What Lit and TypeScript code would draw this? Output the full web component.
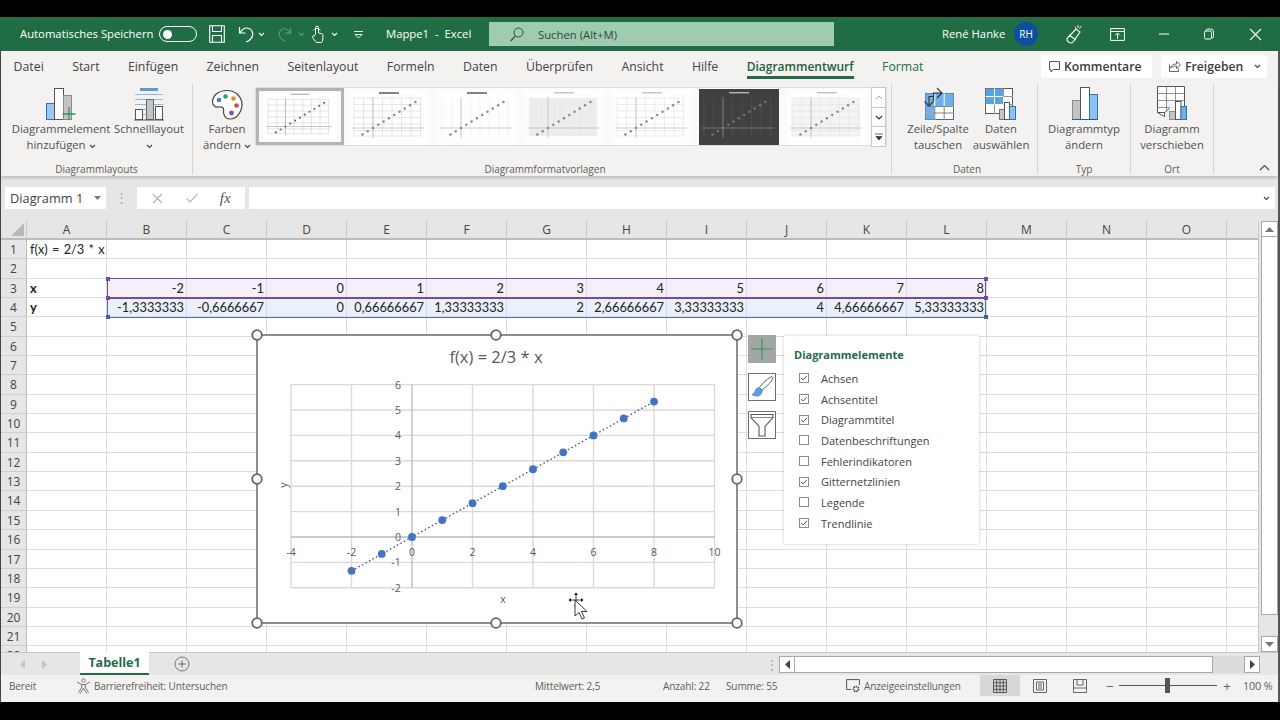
import { LitElement, html, css, svg } from 'lit';
import { customElement } from 'lit/decorators.js';

const COLS = ['A', 'B', 'C', 'D', 'E', 'F', 'G', 'H', 'I', 'J', 'K', 'L', 'M', 'N', 'O', ''];
const XS = ['-2', '-1', '0', '1', '2', '3', '4', '5', '6', '7', '8'];
const YS = [
  '-1,3333333',
  '-0,6666667',
  '0',
  '0,66666667',
  '1,33333333',
  '2',
  '2,66666667',
  '3,33333333',
  '4',
  '4,66666667',
  '5,33333333',
];
const TABS = [
  'Datei',
  'Start',
  'Einfügen',
  'Zeichnen',
  'Seitenlayout',
  'Formeln',
  'Daten',
  'Überprüfen',
  'Ansicht',
  'Hilfe',
  'Diagrammentwurf',
  'Format',
];
const PANEL_ITEMS: [string, boolean][] = [
  ['Achsen', true],
  ['Achsentitel', true],
  ['Diagrammtitel', true],
  ['Datenbeschriftungen', false],
  ['Fehlerindikatoren', false],
  ['Gitternetzlinien', true],
  ['Legende', false],
  ['Trendlinie', true],
];

const caret = (color = '#444') => html`<svg class="caret" width="7" height="5" viewBox="0 0 7 5">
  <path d="M1 1l2.500 2.500L6 1" fill="none" stroke=${color} stroke-width="1.100" />
</svg>`;

// small preview of the chart, one per gallery entry
const thumb = (
  opts: { bg?: string; plot?: string; line?: string; dot?: string; hgrid?: boolean; bold?: boolean } = {}
) => {
  const line = opts.line ?? '#cfcfcf';
  const dot = opts.dot ?? '#5f6a88';
  const vx = [5, 14.500, 24, 33.500, 43, 52.500, 62, 71.500];
  const hy = [9, 15.500, 22, 28.500, 35, 41.500, 47];
  const pts = [-2, -1, 0, 1, 2, 3, 4, 5, 6, 7, 8];
  return html`<svg width="80" height="56" viewBox="0 0 80 56" class="thumb-svg">
    <rect width="80" height="56" fill=${opts.bg ?? '#fff'} />
    ${opts.plot ? svg`<rect x="5" y="9" width="68" height="38" fill=${opts.plot} />` : ''}
    ${vx.map((x) => svg`<line x1=${x} x2=${x} y1="9" y2="47" stroke=${line} stroke-width="0.600" />`)}
    ${opts.hgrid === false
      ? ''
      : hy.map((y) => svg`<line x1="5" x2="72" y1=${y} y2=${y} stroke=${line} stroke-width="0.600" />`)}
    <line x1="3" x2="75" y1="39" y2="39" stroke="#9a9a9a" stroke-width="0.600" />
    <line x1="24" x2="24" y1="8" y2="49" stroke="#9a9a9a" stroke-width="0.600" />
    <rect
      x="30"
      y="3"
      width="20"
      height=${opts.bold ? 2 : 1.400}
      fill=${opts.bold ? '#666' : '#b5b5b5'}
    />
    ${pts.map((p) => svg`<circle cx=${24 + p * 5.300} cy=${39 - p * 3.250} r="1.200" fill=${dot} />`)}
  </svg>`;
};

const bars = html`<svg width="32" height="34" viewBox="0 0 32 34">
  <rect x="1.500" y="16.500" width="8" height="16" fill="#9cc8f2" stroke="#2e75b6" />
  <rect x="9.500" y="1.500" width="9" height="31" fill="#fff" stroke="#555" />
  <rect x="18.500" y="8.500" width="8" height="24" fill="#c4c4c4" stroke="#8a8a8a" />
  <path d="M24 20v13M17.500 27h13" stroke="#2c9158" stroke-width="1.300" fill="none" />
</svg>`;

const quickLayout = html`<svg width="30" height="34" viewBox="0 0 30 34">
  <rect x="6" y="1" width="18" height="3" fill="#5a9bd8" />
  <path d="M1 7.500h28M1 12.500h28M1 17.500h28M1 22.500h28M1 27.500h28" stroke="#8fb9e0" stroke-width="1" />
  <rect x="1.500" y="22.500" width="7" height="10" fill="#fff" stroke="#555" />
  <rect x="12.500" y="12.500" width="7" height="20" fill="#c4c4c4" stroke="#6b6b6b" />
  <rect x="21.500" y="19.500" width="7" height="13" fill="#fff" stroke="#555" />
  <path d="M0 33h30" stroke="#555" />
</svg>`;

const palette = html`<svg width="32" height="32" viewBox="0 0 32 32">
  <path
    d="M16 1.500C7 1.500 1.500 7 1.500 13c0 4 3 5.500 6.500 5 3-.4 5 .5 4.600 3.200-.5 3.300 .6 8.800 6.400 8.800 7 0 12-7.500 12-15C30.500 7 24 1.500 16 1.500z"
    fill="#fff"
    stroke="#444"
    stroke-width="1.200"
  />
  <circle cx="8" cy="11" r="2.300" fill="#3f7fc4" />
  <circle cx="14.500" cy="7.500" r="2.300" fill="#3aa35b" />
  <circle cx="22.500" cy="9.500" r="2.300" fill="#e08a2c" />
  <circle cx="25.500" cy="16.500" r="2.300" fill="#c94f3f" />
  <circle cx="20.500" cy="24" r="2.400" fill="#8b4fa8" />
</svg>`;

const swapTable = html`<svg width="32" height="34" viewBox="0 0 32 34">
  <rect x="3.500" y="6.500" width="28" height="26" fill="#fff" stroke="#4a6c8c" />
  <path d="M3.500 19.500h28v-13h-28z" fill="#6fb0ea" />
  <rect x="3.500" y="19.500" width="9.300" height="13" fill="#6fb0ea" />
  <path d="M3.500 19.500h28M3.500 26h28M12.800 6.500v26M22.200 6.500v26" stroke="#fff" stroke-width="1" />
  <path d="M3.500 19.500h28M3.500 26h28M12.800 19.500v13M22.200 19.500v13" stroke="#555" stroke-width="0.700" />
  <path d="M15 1l5 5-5 5M20 6h-8.500v8" fill="none" stroke="#333" stroke-width="1.100" />
  <path d="M11.500 14.500l-4.500 4.500-4.500-4.500" fill="none" stroke="#333" stroke-width="1.100" />
  <path d="M7 19V9.500h4" fill="none" stroke="#333" stroke-width="1.100" />
</svg>`;

const selectData = html`<svg width="32" height="34" viewBox="0 0 32 34">
  <rect x="0.500" y="1.500" width="27" height="25" fill="#fff" stroke="#555" />
  <rect x="0.500" y="1.500" width="18" height="8" fill="#5aa2e6" />
  <rect x="0.500" y="9.500" width="18" height="8" fill="#5aa2e6" />
  <path d="M0.500 9.500h27M0.500 17.500h27M9.500 1.500v25M18.500 1.500v25" stroke="#fff" />
  <path d="M18.500 9.500h9M18.500 17.500h9M18.500 1.500v8M0.500 17.500v9M9.500 17.500v9" stroke="#666" stroke-width="0.700" />
  <rect x="14.500" y="22.500" width="5" height="10" fill="#c4c4c4" stroke="#777" />
  <rect x="19.500" y="15.500" width="5" height="17" fill="#fff" stroke="#555" />
  <rect x="24.500" y="19.500" width="6" height="13" fill="#8fc0ef" stroke="#2e75b6" />
</svg>`;

const chartType = html`<svg width="30" height="35" viewBox="0 0 30 35">
  <rect x="3.500" y="14.500" width="8" height="19" fill="#c4c4c4" stroke="#8a8a8a" />
  <rect x="11.500" y="1.500" width="9" height="32" fill="#fff" stroke="#555" />
  <rect x="20.500" y="8.500" width="8" height="25" fill="#8fc0ef" stroke="#2e75b6" />
  <path d="M3 33.500h26" stroke="#1f5f99" />
</svg>`;

const moveChart = html`<svg width="32" height="36" viewBox="0 0 32 36">
  <path d="M1.500 1.500h27v21h-9M1.500 1.500v26h7l5-4" fill="#fff" stroke="#555" />
  <path
    d="M1.500 8.500h27M1.500 15.500h27M1.500 22.500h12M10.500 1.500v24M19.500 1.500v21"
    fill="none"
    stroke="#777"
    stroke-width="0.800"
  />
  <path d="M1.500 27.500l7 0 0 4z" fill="#fff" stroke="#555" />
  <rect x="13.500" y="26.500" width="6" height="8" fill="#c4c4c4" stroke="#8a8a8a" />
  <rect x="19.500" y="16.500" width="5.500" height="18" fill="#fff" stroke="#555" />
  <rect x="25" y="21.500" width="5.500" height="13" fill="#6fb0ea" stroke="#2e75b6" />
</svg>`;

const points = [-2, -1, 0, 1, 2, 3, 4, 5, 6, 7, 8];
const X = (v: number) => 162 + 30.250 * v;
const Y = (v: number) => 209 - 25.400 * v;

const chart = html`<svg class="chart-svg" width="500" height="304" viewBox="0 0 500 304">
  <rect x="7" y="7" width="480" height="288" fill="#fff" stroke="#7b7b7b" stroke-width="1.700" />
  <text x="246" y="35" class="c-title" text-anchor="middle">f(x) = 2/3 * x</text>
  ${[-4, -2, 2, 4, 6, 8, 10].map(
    (v) => svg`<line x1=${X(v)} x2=${X(v)} y1=${Y(6)} y2=${Y(-2)} stroke="#d9d9d9" stroke-width="1.400" />`
  )}
  ${[-2, -1, 1, 2, 3, 4, 5, 6].map(
    (v) => svg`<line x1=${X(-4)} x2=${X(10)} y1=${Y(v)} y2=${Y(v)} stroke="#d9d9d9" stroke-width="1.400" />`
  )}
  <line x1=${X(0)} x2=${X(0)} y1=${Y(6)} y2=${Y(-2)} stroke="#b8b8b8" stroke-width="1.300" />
  <line x1=${X(-4)} x2=${X(10)} y1=${Y(0)} y2=${Y(0)} stroke="#b8b8b8" stroke-width="1.300" />
  ${[6, 5, 4, 3, 2, 1, 0, -1, -2].map(
    (v) => svg`<text x=${v < 0 ? 146 : 148} y=${Y(v) + 4} class="c-tick" text-anchor="middle">${v}</text>`
  )}
  ${[-4, -2, 0, 2, 4, 6, 8, 10].map(
    (v) => svg`<text x=${X(v)} y="228" class="c-tick" text-anchor="middle">${v}</text>`
  )}
  <text x="253" y="275" class="c-tick" text-anchor="middle">x</text>
  <text class="c-tick" text-anchor="middle" transform="translate(37 157) rotate(-90)">y</text>
  <line
    x1=${X(-2)}
    y1=${Y(-4 / 3)}
    x2=${X(8)}
    y2=${Y(16 / 3)}
    stroke="#44587c"
    stroke-width="1.400"
    stroke-dasharray="1.500 2.500"
  />
  ${points.map((p) => svg`<circle cx=${X(p)} cy=${Y((p * 2) / 3)} r="3.900" fill="#4472c4" />`)}
  ${[
    [7, 7],
    [246, 7],
    [487, 7],
    [7, 151],
    [487, 151],
    [7, 295],
    [246, 295],
    [487, 295],
  ].map(
    ([cx, cy]) =>
      svg`<circle cx=${cx} cy=${cy} r="4.800" fill="#fff" stroke="#666" stroke-width="1.800" />`
  )}
  <g transform="translate(326 272)" fill="#111">
    <path d="M0-7.500l-2 2.500h4zM0 7.500l-2-2.500h4zM-7.500 0l2.500-2v4zM7.500 0l-2.500-2v4z" />
    <path d="M0-5v10M-5 0h10" stroke="#111" stroke-width="0.800" />
  </g>
  <path d="M325 272v16l4-3.500 3 6.500 2.500-1-3-6.500h5.500z" fill="#fff" stroke="#222" stroke-width="0.900" />
</svg>`;

@customElement('app-root')
class AppRoot extends LitElement {
  static styles = css`
    :host {
      display: block;
      width: 1280px;
      height: 720px;
      background: #000;
      overflow: hidden;
      font-family: 'Open Sans', 'Noto Sans', sans-serif;
      color: #444;
    }
    .window {
      margin-top: 17px;
      height: 685px;
      display: flex;
      flex-direction: column;
      background: #f3f2f1;
      border-left: 1px solid #444;
      border-right: 2px solid #555;
      box-sizing: border-box;
    }

    /* title bar */
    .titlebar {
      flex: 0 0 34px;
      margin-left: -1px;
      margin-right: -2px;
      background: #1f6c45;
      color: #fff;
      font-size: 11.300px;
      display: grid;
      grid-template-columns: 139px 50px 29px 20px 20px 20px 13px 20px 23px 32px 103px 453px 72px 51px 45px 48px 45px 46px 31px;
      padding-left: 20px;
      align-items: center;
      white-space: nowrap;
    }
    .titlebar svg {
      display: block;
    }
    .tt {
      margin-top: -2px;
    }
    .toggle {
      width: 36px;
      height: 14px;
      border: 1.200px solid #fff;
      border-radius: 9px;
      position: relative;
    }
    .toggle::before {
      content: '';
      position: absolute;
      left: 3px;
      top: 2.500px;
      width: 9px;
      height: 9px;
      border-radius: 50%;
      background: #fff;
    }
    .search {
      width: 345px;
      height: 24px;
      background: #9fcbb1;
      color: #2c4a3a;
      display: flex;
      align-items: center;
      gap: 14px;
      padding-left: 21px;
      box-sizing: border-box;
    }
    .avatar {
      width: 24px;
      height: 24px;
      border-radius: 50%;
      background: #0d4f9e;
      font-size: 10px;
      display: flex;
      align-items: center;
      justify-content: center;
    }

    /* ribbon tabs */
    .tabs {
      flex: 0 0 31px;
      display: flex;
      align-items: flex-start;
      gap: 28.400px;
      padding-left: 12.600px;
      font-size: 12.300px;
      color: #444;
      white-space: nowrap;
    }
    .tab {
      height: 31px;
      line-height: 31px;
      box-sizing: border-box;
    }
    .tab.active {
      color: #1d5f41;
      font-weight: 600;
      font-size: 12px;
      border-bottom: 3px solid #1f6c45;
      height: 28px;
    }
    .tab.format {
      color: #1d6f4a;
    }
    .share {
      margin-left: auto;
      margin-top: 4px;
      display: flex;
      gap: 9px;
      margin-right: 11px;
    }
    .share-btn {
      height: 23px;
      background: #fff;
      display: flex;
      align-items: center;
      gap: 3px;
      font-weight: 600;
      font-size: 12.200px;
      color: #3b3b3b;
      box-sizing: border-box;
      padding-left: 7px;
      border-radius: 2px;
    }
    .share-btn.comment {
      width: 111px;
    }
    .share-btn.free {
      width: 106px;
    }
    .share-btn .caret {
      margin-left: 8px;
    }

    /* ribbon body */
    .ribbon {
      flex: 0 0 94px;
      display: flex;
      font-size: 11.300px;
      color: #505050;
      box-shadow: 0 2px 3px rgba(0, 0, 0, 0.18);
      position: relative;
      z-index: 1;
    }
    .group {
      height: 90px;
      margin-top: 2px;
      box-sizing: border-box;
      border-right: 1px solid #d4d4d4;
      display: flex;
      flex-direction: column;
    }
    .group-main {
      flex: 1;
      display: flex;
      align-items: flex-start;
    }
    .group-label {
      flex: 0 0 16px;
      text-align: center;
      font-size: 10px;
      line-height: 16px;
      color: #5c5c5c;
      margin-bottom: -3px;
    }
    .g1 {
      width: 192px;
      padding-left: 5px;
    }
    .g1 .group-label {
      margin-left: -5px;
    }
    .g2 {
      width: 699px;
      padding-left: 12px;
    }
    .g2 .group-label {
      margin-left: -6px;
    }
    .g3 {
      width: 146px;
      padding-left: 11px;
    }
    .g3 .group-label {
      margin-left: -6px;
    }
    .g4 {
      width: 93px;
    }
    .g5 {
      width: 83px;
    }
    .rest {
      flex: 1;
      display: flex;
      justify-content: flex-end;
      align-items: flex-end;
      padding: 0 8px 5px 0;
    }
    .rb {
      display: flex;
      flex-direction: column;
      align-items: center;
      text-align: center;
      white-space: nowrap;
    }
    .rb .ico {
      height: 34px;
      display: flex;
      align-items: flex-end;
      margin-top: 3px;
    }
    .rb .lbl {
      line-height: 16px;
    }
    .w110 {
      width: 110px;
    }
    .w66 {
      width: 66px;
    }
    .w44 {
      width: 44px;
    }
    .w70 {
      width: 70px;
    }
    .w56 {
      width: 56px;
    }
    .wfull {
      width: 100%;
    }
    .gallery {
      margin: 3px 0 0 6px;
      width: 632px;
      height: 59px;
      border: 1px solid #dedede;
      background: #fbfbfa;
      box-sizing: border-box;
      display: flex;
      position: relative;
    }
    .thumb {
      width: 80px;
      height: 56px;
      margin-top: 1px;
      opacity: 0.8;
      flex: none;
    }
    .thumb-svg {
      display: block;
      filter: blur(0.400px);
    }
    .thumb.sel {
      opacity: 1;
      width: 88px;
      height: 57px;
      margin: 0 5px 0 0;
      border: 3px solid #b4b4b4;
      box-sizing: border-box;
    }
    .thumb.sel .thumb-svg {
      width: 82px;
      height: 51px;
    }
    .thumb + .thumb:not(.first) {
      margin-left: 7.500px;
    }
    .spin {
      position: absolute;
      right: 0;
      top: -1px;
      width: 14px;
      height: 59px;
      display: flex;
      flex-direction: column;
      border-left: 1px solid #dedede;
    }
    .spin div {
      flex: 1;
      background: #fff;
      border: 1px solid #c9c9c9;
      margin: 0 0 -1px -1px;
      display: flex;
      align-items: center;
      justify-content: center;
    }

    /* formula bar */
    .formula {
      flex: 0 0 45px;
      background: #e6e6e6;
      display: flex;
      align-items: flex-start;
      padding-top: 11px;
      box-sizing: border-box;
      position: relative;
    }
    .namebox,
    .fx,
    .input {
      height: 22px;
      background: #fff;
      display: flex;
      align-items: center;
      box-sizing: border-box;
    }
    .namebox {
      width: 101px;
      margin-left: 4px;
      padding: 0 5px;
      font-size: 12.800px;
      color: #444;
      justify-content: space-between;
    }
    .vdots {
      width: 31px;
      text-align: center;
      color: #a8a8a8;
      font-size: 13px;
      line-height: 20px;
    }
    .fx {
      width: 108px;
      justify-content: space-around;
      padding: 0 4px;
    }
    .fx i {
      font-family: 'Liberation Serif', serif;
      font-size: 15px;
      color: #555;
    }
    .input {
      margin-left: 4px;
      width: 1026px;
      justify-content: flex-end;
      padding-right: 5px;
    }

    /* sheet */
    .sheet-wrap {
      flex: 0 0 431px;
      display: flex;
      background: #e6e6e6;
    }
    .sheet {
      width: 1258px;
      height: 431px;
      overflow: hidden;
      position: relative;
      background: #fff;
    }
    .grid {
      display: grid;
      grid-template-columns: 26px repeat(15, 80px) 32px;
      grid-template-rows: 19px;
      grid-auto-rows: 19.350px;
      font-family: Lato, 'Open Sans', sans-serif;
      font-size: 12.800px;
      word-spacing: 1px;
      color: #222;
    }
    .grid > div {
      box-sizing: border-box;
      border-right: 1px solid #dcdcdc;
      border-bottom: 1px solid #dcdcdc;
      padding: 0 2px;
      line-height: 19px;
      white-space: nowrap;
      overflow: visible;
    }
    .grid > .ch {
      background: #e6e6e6;
      text-align: center;
      font-family: 'Open Sans', sans-serif;
      font-size: 12px;
      color: #444;
      border-right-color: #c6c6c6;
      border-bottom-color: #bcbcbc;
      border-bottom-width: 2px;
      line-height: 18px;
      padding: 0;
    }
    .grid > .corner {
      position: relative;
    }
    .corner::after {
      content: '';
      position: absolute;
      right: 2px;
      bottom: 2px;
      border-style: solid;
      border-width: 0 0 13px 13px;
      border-color: transparent transparent #b8b8b8 transparent;
    }
    .grid > .rh {
      background: #e6e6e6;
      text-align: center;
      font-family: 'Open Sans', sans-serif;
      font-size: 12px;
      color: #444;
      border-right-color: #bcbcbc;
      border-bottom-color: #cfcfcf;
      padding: 0;
    }
    .grid > .label {
      padding-left: 3px;
    }
    .grid > .num {
      text-align: right;
    }
    .grid > .b {
      font-weight: 700;
    }
    .grid > .r3 {
      background: #f4effa;
    }
    .grid > .r4 {
      background: #eaf1fa;
    }
    .range {
      position: absolute;
      left: 106px;
      width: 879px;
      height: 20px;
      box-sizing: border-box;
      pointer-events: none;
    }
    .range.x {
      top: 57px;
      border: 1.500px solid #6f4ea0;
    }
    .range.y {
      top: 76.500px;
      border: 1.500px solid #4f71b0;
      border-top-color: #6f4ea0;
    }
    .h {
      position: absolute;
      width: 4px;
      height: 4px;
    }
    .h.p {
      background: #6f4ea0;
    }
    .h.u {
      background: #3f5fa8;
    }
    .chart {
      position: absolute;
      left: 249px;
      top: 107px;
    }
    .chart-svg {
      display: block;
      font-family: 'Open Sans', sans-serif;
    }
    .c-title {
      font-size: 16.500px;
      fill: #595959;
    }
    .c-tick {
      font-size: 10.500px;
      fill: #595959;
    }
    .tools {
      position: absolute;
      left: 747px;
      top: 114px;
      display: flex;
      flex-direction: column;
      gap: 10px;
    }
    .tool {
      width: 28px;
      height: 28px;
      box-sizing: border-box;
      border: 1px solid #6e6e6e;
      background: #fff;
      display: flex;
      align-items: center;
      justify-content: center;
    }
    .tool.on {
      background: #a1a8a4;
      border-color: #a1a8a4;
    }
    .panel {
      position: absolute;
      left: 783px;
      top: 115px;
      width: 195px;
      height: 208px;
      background: #fff;
      box-shadow: 0 0 3px rgba(0, 0, 0, 0.22);
      padding: 10px 0 0 10px;
      box-sizing: border-box;
      font-family: 'Open Sans', sans-serif;
    }
    .panel h3 {
      margin: 0 0 4px;
      font-size: 11px;
      line-height: 18px;
      font-weight: 700;
      color: #1e6b49;
    }
    .panel-item {
      height: 20.700px;
      display: flex;
      align-items: center;
      font-size: 11px;
      color: #444;
      white-space: nowrap;
    }
    .check {
      width: 10px;
      height: 10px;
      margin: 0 12px 0 5px;
      border: 1px solid #8a8a8a;
      box-sizing: border-box;
      display: flex;
      background: #fff;
    }

    /* scrollbar */
    .vscroll {
      flex: 1;
      display: flex;
      flex-direction: column;
      padding-left: 2px;
      border-left: 1px solid #c8c8c8;
    }
    .sb-btn {
      width: 17px;
      height: 16px;
      background: #fff;
      border: 1px solid #a8a8a8;
      box-sizing: border-box;
      display: flex;
      align-items: center;
      justify-content: center;
      flex: none;
    }
    .v-thumb {
      width: 17px;
      height: 378px;
      background: #fff;
      border: 1px solid #a8a8a8;
      border-top: 0;
      box-sizing: border-box;
      flex: none;
    }
    .v-space {
      flex: 1;
    }

    /* sheet tabs */
    .sheetbar {
      flex: 0 0 23px;
      background: #e6e6e6;
      border-top: 1px solid #c8c8c8;
      box-sizing: border-box;
      display: grid;
      grid-template-columns: 79px 69px 617px 13px 481px;
      align-items: center;
    }
    .nav {
      display: flex;
      gap: 17px;
      padding-left: 19px;
      color: #b5b5b5;
    }
    .sheet-tab {
      height: 23px;
      margin-top: -1px;
      background: #fff;
      border-bottom: 2px solid #1f6c45;
      box-sizing: border-box;
      text-align: center;
      font-weight: 700;
      font-size: 12.500px;
      line-height: 22px;
      color: #1e6b49;
    }
    .add {
      padding-left: 25px;
    }
    .hdots {
      color: #a8a8a8;
      font-size: 12px;
    }
    .hscroll {
      display: flex;
      height: 17px;
      width: 481px;
    }
    .hscroll .sb-btn {
      width: 16px;
      height: 17px;
    }
    .h-thumb {
      width: 418px;
      background: #fff;
      border: 1px solid #a8a8a8;
      border-left: 0;
      box-sizing: border-box;
    }
    .h-space {
      flex: 1;
      background: #dcdcdc;
    }

    /* status bar */
    .status {
      flex: 1;
      display: grid;
      grid-template-columns: 67px 459px 128px 63px 120px 134px 40px 40px 40px 143px 1fr;
      padding: 0 0 6px 8px;
      align-items: center;
      font-size: 10px;
      letter-spacing: -0.120px;
      color: #5c5c5c;
      white-space: nowrap;
    }
    .status > div {
      display: flex;
      align-items: center;
      gap: 3px;
    }
    .status > .view {
      justify-content: center;
      height: 21px;
    }
    .status > .view.on {
      background: #d8d8d8;
    }
    .status > .zoom {
      padding-left: 6px;
      gap: 6px;
      font-size: 13px;
    }
    .status > .pct {
      font-size: 10.800px;
    }
    .slider {
      width: 98px;
      height: 1.500px;
      background: #555;
      position: relative;
    }
    .slider::after {
      content: '';
      position: absolute;
      left: 46px;
      top: -7px;
      width: 5px;
      height: 15px;
      background: #555;
    }
  `;

  render() {
    const rows = Array.from({ length: 22 }, (_, i) => i + 1);
    return html`
      <div class="window">
        ${this.renderTitlebar()}
        <div class="tabs">
          ${TABS.map(
            (t) =>
              html`<div class="tab ${t === 'Diagrammentwurf' ? 'active' : ''} ${t === 'Format' ? 'format' : ''}">
                ${t}
              </div>`
          )}
          <div class="share">
            <div class="share-btn comment">
              <svg width="13" height="13" viewBox="0 0 13 13">
                <path d="M1.500 1.500h10v8h-6l-2.500 2.500v-2.500h-1.500z" fill="none" stroke="#555" />
              </svg>
              Kommentare
            </div>
            <div class="share-btn free">
              <svg width="14" height="13" viewBox="0 0 14 13">
                <path d="M1.500 4.500v7h9v-3M2.500 8c1-3 3-4 6-4V1.500l4 3.500-4 3.500V6c-2 0-4 .5-6 2z" fill="none" stroke="#666" />
              </svg>
              Freigeben ${caret()}
            </div>
          </div>
        </div>
        ${this.renderRibbon()}
        <div class="formula">
          <div class="namebox">
            Diagramm 1
            <svg width="7" height="4" viewBox="0 0 7 4"><path d="M0 0h7L3.500 4z" fill="#777" /></svg>
          </div>
          <div class="vdots">⋮</div>
          <div class="fx">
            <svg width="13" height="13" viewBox="0 0 13 13">
              <path d="M2 2l9 9M11 2l-9 9" stroke="#b4b4b4" stroke-width="1.200" />
            </svg>
            <svg width="14" height="12" viewBox="0 0 14 12">
              <path d="M1.500 6.500l3.500 3.500 7.500-8" fill="none" stroke="#b4b4b4" stroke-width="1.200" />
            </svg>
            <i>fx</i>
          </div>
          <div class="input">${caret()}</div>
        </div>
        <div class="sheet-wrap">
          <div class="sheet">
            <div class="grid">
              <div class="ch corner"></div>
              ${COLS.map((c) => html`<div class="ch">${c}</div>`)}
              ${rows.map((r) => this.renderRow(r))}
            </div>
            <div class="range x"></div>
            <div class="range y"></div>
            ${[
              [105, 56, 'p'],
              [983, 56, 'p'],
              [105, 75, 'p'],
              [983, 75, 'p'],
              [105, 94, 'u'],
              [983, 94, 'u'],
            ].map(
              ([l, t, k]) =>
                html`<div class="h ${k}" style="left:${l}px;top:${t}px"></div>`
            )}
            <div class="chart">${chart}</div>
            <div class="tools">
              <div class="tool on">
                <svg width="24" height="24" viewBox="0 0 24 24">
                  <path d="M12 1v22M1 12h22" stroke="#3f8f63" stroke-width="1.200" />
                </svg>
              </div>
              <div class="tool">
                <svg width="24" height="24" viewBox="0 0 24 24">
                  <path d="M22 1.500c-3 1-9 6-12.500 11l2.500 2.500c5-3.500 10.500-9.500 11-12.500z" fill="#fff" stroke="#555" />
                  <path d="M9.500 12.500c-3 0-4 2-4.500 4-.4 1.500-2 2.500-3 3 3 2.500 8 2 9.500-1 .8-1.500.8-2.800.5-3.500z" fill="#5f9ed8" stroke="#3d79b4" stroke-width="0.600" />
                </svg>
              </div>
              <div class="tool">
                <svg width="26" height="26" viewBox="0 0 26 26">
                  <path d="M2 2.500h22v3l-8 9v9.500h-6v-9.500l-8-9z" fill="#fff" stroke="#555" stroke-width="1.100" />
                  <path d="M2 5.500h22" stroke="#555" stroke-width="0.700" />
                </svg>
              </div>
            </div>
            <div class="panel">
              <h3>Diagrammelemente</h3>
              ${PANEL_ITEMS.map(
                ([name, on]) => html`<div class="panel-item">
                  <span class="check">
                    ${on
                      ? html`<svg width="8" height="8" viewBox="0 0 8 8">
                          <path d="M1.200 4l2 2 3.800-4.200" fill="none" stroke="#555" stroke-width="1" />
                        </svg>`
                      : ''}
                  </span>
                  ${name}
                </div>`
              )}
            </div>
          </div>
          <div class="vscroll">
            <div class="sb-btn">
              <svg width="9" height="5" viewBox="0 0 9 5"><path d="M4.500 0L9 5H0z" fill="#777" /></svg>
            </div>
            <div class="v-thumb"></div>
            <div class="v-space"></div>
            <div class="sb-btn">
              <svg width="9" height="5" viewBox="0 0 9 5"><path d="M0 0h9L4.500 5z" fill="#777" /></svg>
            </div>
          </div>
        </div>
        <div class="sheetbar">
          <div class="nav">
            <svg width="5" height="9" viewBox="0 0 5 9"><path d="M5 0v9L0 4.500z" fill="#c4c4c4" /></svg>
            <svg width="5" height="9" viewBox="0 0 5 9"><path d="M0 0v9l5-4.500z" fill="#c4c4c4" /></svg>
          </div>
          <div class="sheet-tab">Tabelle1</div>
          <div class="add">
            <svg width="16" height="16" viewBox="0 0 16 16" style="display:block">
              <circle cx="8" cy="8" r="7" fill="none" stroke="#777" />
              <path d="M8 4.500v7M4.500 8h7" stroke="#666" />
            </svg>
          </div>
          <div class="hdots">⋮</div>
          <div class="hscroll">
            <div class="sb-btn">
              <svg width="5" height="9" viewBox="0 0 5 9"><path d="M5 0v9L0 4.500z" fill="#444" /></svg>
            </div>
            <div class="h-thumb"></div>
            <div class="h-space"></div>
            <div class="sb-btn">
              <svg width="5" height="9" viewBox="0 0 5 9"><path d="M0 0v9l5-4.500z" fill="#444" /></svg>
            </div>
          </div>
        </div>
        ${this.renderStatus()}
      </div>
    `;
  }

  private renderRow(r: number) {
    const first = r === 1 ? 'f(x) = 2/3 * x' : r === 3 ? 'x' : r === 4 ? 'y' : '';
    const vals = r === 3 ? XS : r === 4 ? YS : [];
    return html`
      <div class="rh">${r}</div>
      <div class="label ${r === 3 || r === 4 ? 'b' : ''}">${first}</div>
      ${COLS.slice(1).map(
        (_, i) => html`<div class="num ${i < 11 && r === 3 ? 'r3' : ''} ${i < 11 && r === 4 ? 'r4' : ''}">
          ${vals[i] ?? ''}
        </div>`
      )}
    `;
  }

  private renderTitlebar() {
    return html`
      <div class="titlebar">
        <div class="tt">Automatisches Speichern</div>
        <div class="toggle"></div>
        <svg width="16" height="18" viewBox="0 0 16 18">
          <path d="M.7.700h14.600v16.600H.7z" fill="none" stroke="#fff" stroke-width="1.100" />
          <path d="M3.500 1v5.500h9V1M3.500 17v-6.500h9V17" fill="none" stroke="#fff" stroke-width="1.100" />
        </svg>
        <svg width="16" height="18" viewBox="0 0 16 18">
          <path d="M1.500 2v6h6M1.700 8c2-3 4-5 7-5 3.500 0 6 3 6 6 0 4-3 6.500-6.500 8" fill="none" stroke="#fff" stroke-width="1.200" />
        </svg>
        ${caret('#fff')}
        <svg width="14" height="18" viewBox="0 0 16 18" opacity="0.3">
          <path d="M14.500 2v6h-6M14.300 8c-2-3-4-5-7-5-3.500 0-6 3-6 6 0 4 3 6.500 6.500 8" fill="none" stroke="#fff" stroke-width="1.200" />
        </svg>
        ${caret('#5d9a7b')}
        <svg width="13" height="19" viewBox="0 0 13 19">
          <path d="M4.500 9V2.700a1.500 1.500 0 0 1 3 0V8l3 .7c1 .3 1.700 1 1.600 2l-.6 5.300c-.1.800-.7 1.500-1.500 1.500H6c-.6 0-1.100-.3-1.500-.8L1.500 12.500c-.6-1 .7-2.200 1.700-1.300z" fill="none" stroke="#fff" />
          <path d="M2.500 5.500a4 4 0 0 1 7 0" fill="none" stroke="#fff" stroke-width="0.900" />
        </svg>
        ${caret('#fff')}
        <svg width="9" height="9" viewBox="0 0 9 9">
          <path d="M0 1.500h9M1 4.500l3.500 3.500L8 4.500z" fill="none" stroke="#fff" stroke-width="0.900" />
        </svg>
        <div class="tt">Mappe1&nbsp; - &nbsp;Excel</div>
        <div class="search">
          <svg width="14" height="15" viewBox="0 0 14 15">
            <circle cx="8.500" cy="5.500" r="4.500" fill="none" stroke="#23513a" />
            <path d="M5.200 8.800L.8 14" stroke="#23513a" stroke-width="1.200" />
          </svg>
          Suchen (Alt+M)
        </div>
        <div class="tt">René Hanke</div>
        <div class="avatar">RH</div>
        <svg width="18" height="20" viewBox="0 0 18 20">
          <path d="M11 5l4 3-7 10c-1 1.200-3 1-4.500 0S1.500 15 2.500 14zM4 11l7 5" fill="none" stroke="#fff" stroke-width="1.100" />
          <path d="M13 1v3M16 2l-1.500 2.500M10 2.500l1 2" stroke="#fff" stroke-width="0.900" />
        </svg>
        <svg width="15" height="13" viewBox="0 0 15 13">
          <path d="M.6.600h13.800v11.800H.6zM.6 3.500h13.800M7.500 11V5.500M5 7.500l2.500-2.500L10 7.500" fill="none" stroke="#fff" />
        </svg>
        <svg width="12" height="2" viewBox="0 0 12 2"><path d="M1 1h10" stroke="#fff" /></svg>
        <svg width="12" height="12" viewBox="0 0 12 12">
          <path d="M3 3V2.500A1.500 1.500 0 0 1 4.500 1h3A3 3 0 0 1 10.500 4v4.500A1.500 1.500 0 0 1 9 10M1.500 4.500A1.500 1.500 0 0 1 3 3h4A1.500 1.500 0 0 1 8.500 4.500v5A1.500 1.500 0 0 1 7 11H3A1.500 1.500 0 0 1 1.500 9.500z" fill="none" stroke="#fff" />
        </svg>
        <svg width="13" height="13" viewBox="0 0 13 13">
          <path d="M1 1l11 11M12 1L1 12" stroke="#fff" stroke-width="1.100" />
        </svg>
      </div>
    `;
  }

  private renderRibbon() {
    return html`
      <div class="ribbon">
        <div class="group g1">
          <div class="group-main">
            <div class="rb w110">
              <div class="ico">${bars}</div>
              <div class="lbl">Diagrammelement<br />hinzufügen ${caret()}</div>
            </div>
            <div class="rb w66">
              <div class="ico">${quickLayout}</div>
              <div class="lbl">Schnelllayout<br />${caret()}</div>
            </div>
          </div>
          <div class="group-label">Diagrammlayouts</div>
        </div>
        <div class="group g2">
          <div class="group-main">
            <div class="rb w44">
              <div class="ico">${palette}</div>
              <div class="lbl">Farben<br />ändern ${caret()}</div>
            </div>
            <div class="gallery">
              <div class="thumb sel first">${thumb({ hgrid: true })}</div>
              <div class="thumb first">${thumb({ bold: true })}</div>
              <div class="thumb">${thumb({ hgrid: false, bold: true, line: '#e6e6e6' })}</div>
              <div class="thumb">${thumb({ plot: '#e9e9e9', line: '#f4f4f4', hgrid: false })}</div>
              <div class="thumb">${thumb({ line: '#dcdcdc' })}</div>
              <div class="thumb" style="opacity:1">
                ${thumb({ bg: '#404040', line: '#555', dot: '#777', hgrid: false })}
              </div>
              <div class="thumb">${thumb({ line: '#dcdcdc', plot: '#f3f3f3' })}</div>
              <div class="spin">
                <div>
                  <svg width="8" height="5" viewBox="0 0 8 5">
                    <path d="M1 4l3-3 3 3" fill="none" stroke="#aaa" />
                  </svg>
                </div>
                <div>
                  <svg width="8" height="5" viewBox="0 0 8 5">
                    <path d="M1 1l3 3 3-3" fill="none" stroke="#333" stroke-width="1.200" />
                  </svg>
                </div>
                <div>
                  <svg width="8" height="8" viewBox="0 0 8 8">
                    <path d="M0 1h8M1 3.500h6L4 7z" fill="#333" stroke="#333" stroke-width="0.700" />
                  </svg>
                </div>
              </div>
            </div>
          </div>
          <div class="group-label">Diagrammformatvorlagen</div>
        </div>
        <div class="group g3">
          <div class="group-main">
            <div class="rb w70">
              <div class="ico">${swapTable}</div>
              <div class="lbl">Zeile/Spalte<br />tauschen</div>
            </div>
            <div class="rb w56">
              <div class="ico">${selectData}</div>
              <div class="lbl">Daten<br />auswählen</div>
            </div>
          </div>
          <div class="group-label">Daten</div>
        </div>
        <div class="group g4">
          <div class="group-main">
            <div class="rb wfull">
              <div class="ico">${chartType}</div>
              <div class="lbl">Diagrammtyp<br />ändern</div>
            </div>
          </div>
          <div class="group-label">Typ</div>
        </div>
        <div class="group g5">
          <div class="group-main">
            <div class="rb wfull">
              <div class="ico">${moveChart}</div>
              <div class="lbl">Diagramm<br />verschieben</div>
            </div>
          </div>
          <div class="group-label">Ort</div>
        </div>
        <div class="rest">
          <svg width="11" height="7" viewBox="0 0 11 7">
            <path d="M1 6l4.500-4.500L10 6" fill="none" stroke="#444" stroke-width="1.100" />
          </svg>
        </div>
      </div>
    `;
  }

  private renderStatus() {
    return html`
      <div class="status">
        <div>Bereit</div>
        <div>
          <svg width="15" height="16" viewBox="0 0 15 16">
            <circle cx="7.500" cy="2.500" r="1.800" fill="none" stroke="#666" stroke-width="0.800" />
            <path d="M1 4l4.500 2.500h4L14 4M5.500 6.500L6 9 2.500 14.500M9.500 6.500L9 9l3.500 5.500M7 10l4 5.500M8 10l-4 5.500" fill="none" stroke="#666" stroke-width="0.900" />
          </svg>
          Barrierefreiheit: Untersuchen
        </div>
        <div>Mittelwert: 2,5</div>
        <div>Anzahl: 22</div>
        <div>Summe: 55</div>
        <div>
          <svg width="15" height="14" viewBox="0 0 15 14">
            <path d="M5 10.500H.6V.600h12.800V6" fill="none" stroke="#555" />
            <circle cx="10" cy="10" r="2.500" fill="none" stroke="#444" stroke-width="1.600" stroke-dasharray="1.500 0.700" />
          </svg>
          Anzeigeeinstellungen
        </div>
        <div class="view on">
          <svg width="14" height="14" viewBox="0 0 14 14">
            <path d="M.5.500h13v13H.5zM.5 3.700h13M.5 7h13M.5 10.300h13M3.700.5v13M7 .5v13M10.300.5v13" fill="none" stroke="#555" />
          </svg>
        </div>
        <div class="view">
          <svg width="14" height="14" viewBox="0 0 14 14">
            <path d="M.5.500h13v13H.5zM3.500 3h7v8h-7zM5 5h4M5 7h4M5 9h4" fill="none" stroke="#666" />
          </svg>
        </div>
        <div class="view">
          <svg width="14" height="14" viewBox="0 0 14 14">
            <path d="M.5.500h13v13H.5zM.5 9h13M4 .5V6h6V.5" fill="none" stroke="#666" />
          </svg>
        </div>
        <div class="zoom">−<span class="slider"></span>+</div>
        <div class="pct">100 %</div>
      </div>
    `;
  }
}
